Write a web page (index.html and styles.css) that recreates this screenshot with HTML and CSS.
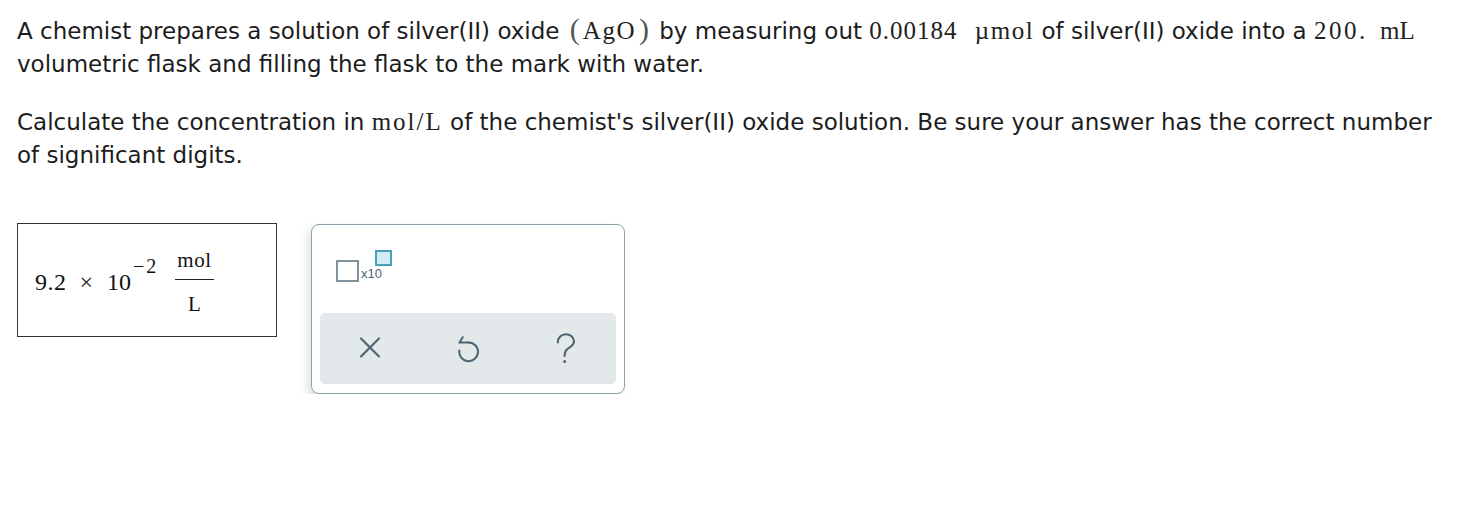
FILE: index.html
```html
<!DOCTYPE html>
<html>
<head>
<meta charset="utf-8">
<link rel="stylesheet" href="styles.css">
</head>
<body>
<div class="page">
  <p class="para">A chemist prepares a solution of silver(II) oxide <span class="m"><span class="paren">(</span><span class="sp">AgO</span><span class="paren">)</span></span> by measuring out <span class="m num-s">0.00184</span> <span class="m unit">µmol</span> of silver(II) oxide into a <span class="m num-s n200">200.</span> <span class="m">mL</span> volumetric flask and filling the flask to the mark with water.</p>
  <p class="para">Calculate the concentration in <span class="m molL">mol/L</span> of the chemist's silver(II) oxide solution. Be sure your answer has the correct number of significant digits.</p>
  <div class="answer-row">
    <div class="answer">
      <span class="a-num">9.2</span><span class="a-times">×</span><span class="a-ten">10</span><span class="a-exp">−2</span>
      <span class="frac"><span class="top">mol</span><span class="bot">L</span></span>
    </div>
    <div class="tools">
      <div class="tool-top">
        <div class="x10">
          <span class="box"></span><span class="xt">x10</span><span class="sbox"></span>
        </div>
      </div>
      <div class="tool-bar">
        <svg class="ic ic-x" width="22" height="21" viewBox="0 0 22 21"><path d="M2 1.5 L20 19.5 M20 1.5 L2 19.5" stroke="#4e6571" stroke-width="2.2" stroke-linecap="round" fill="none"/></svg>
        <svg class="ic ic-undo" width="24" height="27" viewBox="0 0 24 27"><path d="M5.7 1.2 L2.5 6.6 L11.5 6.4" stroke="#4e6571" stroke-width="2" stroke-linecap="round" stroke-linejoin="round" fill="none"/><path d="M11.5 6.4 A9.4 9.4 0 1 1 2.3 14.5" stroke="#4e6571" stroke-width="2" stroke-linecap="round" fill="none"/></svg>
        <svg class="ic ic-q" width="21" height="31" viewBox="0 0 21 31"><path d="M1.8 9.5 C1.8 4.5 5.5 1.2 9.8 1.2 C14.3 1.2 18 4.2 18 8.5 C18 12.3 14.6 13.6 11.8 15.6 C9.6 17.2 8.6 18.6 8.6 23" stroke="#4e6571" stroke-width="2.1" stroke-linecap="round" fill="none"/><circle cx="8.6" cy="28.6" r="1.5" fill="#4e6571"/></svg>
      </div>
    </div>
  </div>
</div>
</body>
</html>
```
FILE: styles.css
```css
html, body {
  margin: 0;
  padding: 0;
  background: #ffffff;
}
.page {
  padding: 12px 0 0 17px;
  font-family: "DejaVu Sans", Verdana, sans-serif;
  font-size: 23px;
  color: #1c1c1c;
}
.para {
  margin: 0 0 24px 0;
  width: 1440px;
  line-height: 33px;
}
.m {
  font-family: "Liberation Serif", "Times New Roman", serif;
  font-size: 25px;
  color: #222;
}
.sp {
  letter-spacing: 1.5px;
}
.paren {
  font-size: 30px;
  color: #555;
  margin: 0 3px;
}
.num-s {
  letter-spacing: 1px;
}
.n200 {
  letter-spacing: 2.5px;
  margin-right: 5px;
}
.unit {
  margin-left: 10px;
  letter-spacing: 1.5px;
}
.molL {
  letter-spacing: 2px;
}
.answer-row {
  display: flex;
  align-items: flex-start;
  margin-top: 51px;
  gap: 34px;
}
.answer {
  width: 260px;
  height: 114px;
  border: 1px solid #333;
  box-sizing: border-box;
  display: flex;
  align-items: flex-start;
  padding-left: 17px;
  font-family: "Liberation Serif", "Times New Roman", serif;
  color: #111;
}
.a-num, .a-times, .a-ten {
  font-size: 24px;
  line-height: 24px;
  margin-top: 46px;
}
.a-num {
  letter-spacing: 0.5px;
}
.a-times {
  margin-left: 13px;
}
.a-ten {
  margin-left: 14px;
}
.a-exp {
  font-size: 20px;
  line-height: 20px;
  margin-top: 32px;
  margin-left: 2px;
  letter-spacing: 2px;
}
.frac {
  display: flex;
  flex-direction: column;
  align-items: center;
  margin-left: 17px;
  margin-top: 26px;
  font-size: 21px;
  line-height: 21px;
}
.top {
  padding: 0 2px 8px 2px;
  letter-spacing: 0.5px;
  border-bottom: 1px solid #222;
}
.bot {
  padding-top: 14px;
}
.tools {
  width: 314px;
  height: 170px;
  box-sizing: border-box;
  border: 1.5px solid #8fa2ab;
  border-radius: 8px;
  margin-top: 1px;
  box-shadow: -4px 5px 9px rgba(110, 130, 140, 0.22);
  padding: 0 8px 9px 8px;
  display: flex;
  flex-direction: column;
  background: #fff;
}
.tool-top {
  height: 88px;
  flex: none;
  position: relative;
}
.x10 {
  position: absolute;
  left: 16px;
  top: 25px;
  width: 60px;
  height: 34px;
}
.box {
  position: absolute;
  left: 0;
  top: 10px;
  width: 19px;
  height: 18px;
  border: 2px solid #7f919b;
}
.xt {
  position: absolute;
  left: 25px;
  top: 17px;
  font-family: "Liberation Sans", Arial, sans-serif;
  font-size: 13px;
  line-height: 13px;
  color: #4e6571;
}
.sbox {
  position: absolute;
  left: 39px;
  top: 0;
  width: 13px;
  height: 12px;
  border: 2px solid #48a0b9;
  background: #d4edf4;
}
.tool-bar {
  flex: 1;
  background: #e3e8eb;
  border-radius: 5px;
  display: flex;
  align-items: center;
  padding: 0 0 0 39px;
}
.ic {
  display: block;
  flex: none;
}
.ic-x {
  margin-top: -3px;
}
.ic-undo {
  margin-left: 76px;
  margin-top: 2px;
}
.ic-q {
  margin-left: 75px;
  margin-top: -1px;
}
```
